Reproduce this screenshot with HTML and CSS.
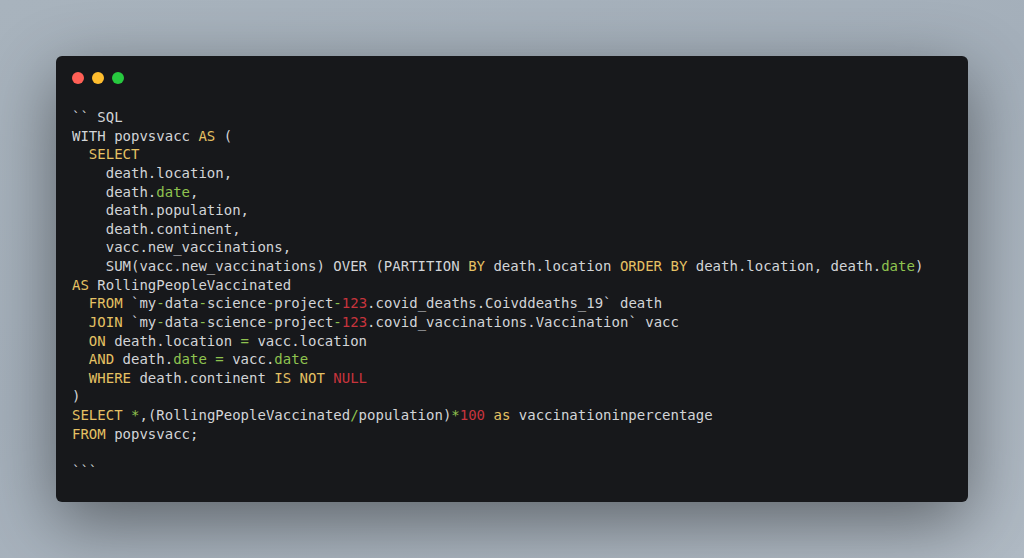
FILE: index.html
```html
<!DOCTYPE html>
<html>
<head>
<meta charset="utf-8">
<link rel="stylesheet" href="styles.css">
</head>
<body>
<div class="window">
  <div class="dots"><span class="dot red"></span><span class="dot yellow"></span><span class="dot green"></span></div>
  <pre class="code">`` SQL
WITH popvsvacc <span class="k">AS</span> (
  <span class="k">SELECT</span>
    death.location,
    death.<span class="g">date</span>,
    death.population,
    death.continent,
    vacc.new_vaccinations,
    SUM(vacc.new_vaccinations) OVER (PARTITION <span class="k">BY</span> death.location <span class="k">ORDER BY</span> death.location, death.<span class="g">date</span>)
<span class="k">AS</span> RollingPeopleVaccinated
  <span class="k">FROM</span> `my<span class="g">-</span>data<span class="g">-</span>science<span class="g">-</span>project<span class="g">-</span><span class="r">123</span>.covid_deaths.Coivddeaths_19` death
  <span class="k">JOIN</span> `my<span class="g">-</span>data<span class="g">-</span>science<span class="g">-</span>project<span class="g">-</span><span class="r">123</span>.covid_vaccinations.Vaccination` vacc
  <span class="k">ON</span> death.location <span class="g">=</span> vacc.location
  <span class="k">AND</span> death.<span class="g">date</span> <span class="g">=</span> vacc.<span class="g">date</span>
  <span class="k">WHERE</span> death.continent <span class="k">IS NOT</span> <span class="r">NULL</span>
)
<span class="k">SELECT</span> <span class="g">*</span>,(RollingPeopleVaccinated<span class="g">/</span>population)<span class="g">*</span><span class="r">100</span> <span class="k">as</span> vaccinationinpercentage
<span class="k">FROM</span> popvsvacc;

```</pre>
</div>
</body>
</html>
```
FILE: styles.css
```css
html, body {
  margin: 0;
  height: 100%;
}
body {
  box-sizing: border-box;
  padding: 56px;
  background: linear-gradient(160deg, #a8b3bd 0%, #a4afba 45%, #b0bac4 100%);
}
.window {
  box-sizing: border-box;
  width: 912px;
  height: 446px;
  background: #17181b;
  border-radius: 6px;
  padding: 16px 16px 0 16px;
  box-shadow: 0 20px 68px rgba(0, 0, 0, 0.45);
}
.dots {
  display: flex;
  gap: 8px;
  height: 12px;
}
.dot {
  width: 12px;
  height: 12px;
  border-radius: 50%;
}
.red { background: #ff5f56; }
.yellow { background: #ffbd2e; }
.green { background: #27c93f; }
.code {
  margin: 24px 0 0 0;
  font-family: "DejaVu Sans Mono", monospace;
  font-size: 14px;
  line-height: 18.62px;
  color: #d2d4d7;
}
.k { color: #e5c163; }
.g { color: #8fc34f; }
.r { color: #c8343d; }
```
